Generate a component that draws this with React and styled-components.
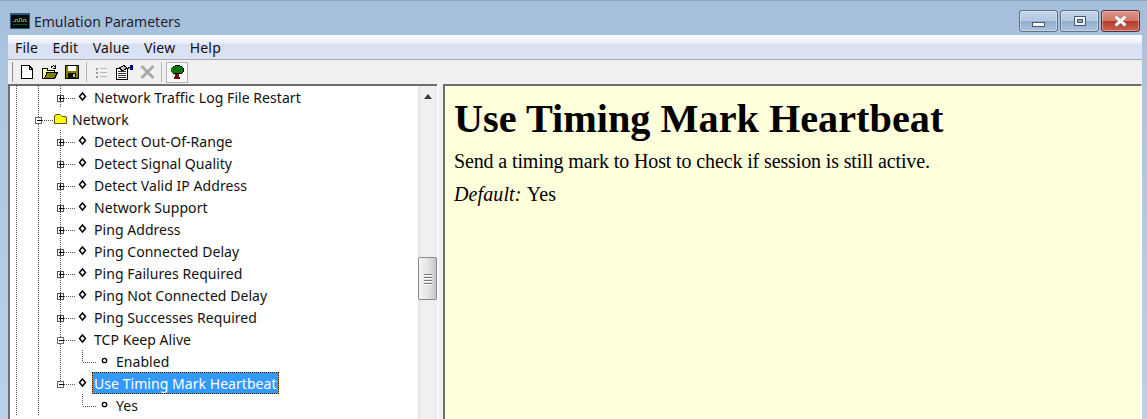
import React from 'react';
import styled, { createGlobalStyle } from 'styled-components';

const GlobalStyle = createGlobalStyle`
  html, body {
    margin: 0;
    height: 100%;
    overflow: hidden;
  }
`;

const Window = styled.div`
  box-sizing: border-box;
  height: 100vh;
  padding: 0 5px 0 8px;
  display: flex;
  flex-direction: column;
  background: linear-gradient(180deg, #a4bdd9 0%, #aac4e0 12%, #b9d1ec 100%);
  box-shadow: inset 0 1px 0 #8fa6bf;
  font-family: 'Noto Sans', sans-serif;
  color: #111;
`;

const TitleBar = styled.div`
  box-sizing: border-box;
  height: 35px;
  flex: none;
  display: flex;
  align-items: center;
  padding: 7px 2px 0 2px;
`;

const Title = styled.div`
  margin-left: 4px;
  font-size: 14px;
  color: #1c2430;
`;

const WinButtons = styled.div`
  margin-left: auto;
  display: flex;
  gap: 2px;
`;

const WinButton = styled.div`
  box-sizing: border-box;
  width: 39px;
  height: 22px;
  border: 1px solid ${p => (p.$close ? '#5d2a35' : '#5f7088')};
  border-radius: 3px;
  display: flex;
  align-items: center;
  justify-content: center;
  background: ${p =>
    p.$close
      ? 'linear-gradient(180deg, #df9488 0%, #d3786a 48%, #b8392a 52%, #c5675a 100%)'
      : 'linear-gradient(180deg, #c3d5e9 0%, #b4c9e1 48%, #94afcb 52%, #a8c2dc 100%)'};
  box-shadow: inset 0 0 0 1px rgba(255, 255, 255, 0.35);
`;

const Client = styled.div`
  flex: 1;
  min-height: 0;
  display: flex;
  flex-direction: column;
  background: #f0f0f0;
`;

const MenuBar = styled.div`
  box-sizing: border-box;
  height: 25px;
  flex: none;
  display: flex;
  align-items: center;
  padding-left: 7px;
  gap: 14.5px;
  font-size: 14px;
  letter-spacing: 0.15px;
  background: linear-gradient(180deg, #fbfcfe 0%, #e9eef9 34%, #d9e0f2 38%, #dbe2f3 100%);
  border-bottom: 1px solid #a9abb0;
`;

const ToolBar = styled.div`
  height: 24px;
  flex: none;
  display: flex;
  align-items: center;
  padding-left: 4px;
  background: #f0f0f0;
`;

const Gripper = styled.div`
  width: 1px;
  height: 20px;
  background: #8b8b8b;
  margin-right: 3px;
`;

const ToolIcon = styled.div`
  width: ${p => p.$w || 22}px;
  height: 22px;
  display: flex;
  align-items: center;
  justify-content: center;
`;

const ToolSep = styled.div`
  width: 1px;
  height: 20px;
  margin: 0 3px;
  background: #b5b5b5;
`;

const ToolPressed = styled.div`
  box-sizing: border-box;
  width: 22px;
  height: 21px;
  margin-left: 1px;
  border: 1px solid #b2b2b2;
  background: #fafafa;
  display: flex;
  align-items: center;
  justify-content: center;
`;

const Panes = styled.div`
  flex: 1;
  min-height: 0;
  display: flex;
`;

const TreePane = styled.div`
  box-sizing: border-box;
  width: 429px;
  flex: none;
  display: flex;
  border-top: 2px solid #6e6e6e;
  border-left: 2px solid #6e6e6e;
  background: #fff;
`;

const TreeList = styled.div`
  flex: 1;
  min-width: 0;
  overflow: hidden;
`;

const RowWrap = styled.div`
  height: 22px;
  display: flex;
  align-items: flex-start;
  font-size: 14px;
  letter-spacing: 0.05px;
  white-space: nowrap;
`;

const RowLabel = styled.span`
  padding: 0 1px;
  height: 22px;
  line-height: 21px;
  box-sizing: border-box;
  border: 1px dotted transparent;
  ${p =>
    p.$selected &&
    `
    background: linear-gradient(#3399ff, #3399ff) padding-box, #d9861e;
    color: #fff;
    border-color: #222;
  `}
`;

const ScrollBar = styled.div`
  width: 19px;
  flex: none;
  display: flex;
  flex-direction: column;
  align-items: center;
  background: linear-gradient(90deg, #e4e4e4 0%, #f0f0f0 20%, #f0f0f0 85%, #e8e8e8 100%);
`;

const ScrollArrow = styled.div`
  margin-top: 8px;
  width: 0;
  height: 0;
  border-left: 4px solid transparent;
  border-right: 4px solid transparent;
  border-bottom: 5px solid #3c3c3c;
`;

const ScrollThumb = styled.div`
  box-sizing: border-box;
  margin-top: 158px;
  width: 19px;
  height: 43px;
  border: 1px solid #8a8a8a;
  border-radius: 2px;
  background: linear-gradient(90deg, #f5f5f5 0%, #e6e6e6 50%, #c8c8c8 100%);
  display: flex;
  flex-direction: column;
  align-items: center;
  justify-content: center;
  gap: 2px;
`;

const ThumbLine = styled.div`
  width: 8px;
  height: 1px;
  background: #777;
  box-shadow: 0 1px 0 #fff;
`;

const Splitter = styled.div`
  box-sizing: border-box;
  width: 6px;
  flex: none;
  background: #f0f0f0;
  border-left: 2px solid #fafafa;
`;

const ContentPane = styled.div`
  flex: 1;
  min-width: 0;
  box-sizing: border-box;
  padding: 0 9px;
  border-top: 2px solid #6e6e6e;
  border-left: 2px solid #6e6e6e;
  border-right: 1px solid #fff;
  background: #ffffdc;
  font-family: 'Liberation Serif', serif;
  color: #000;
  font-size: 20px;
`;

const Heading = styled.h1`
  margin: 10px 0 8px;
  font-size: 40.25px;
  line-height: 46px;
  font-weight: bold;
`;

const Para = styled.p`
  margin: 0;
  line-height: 23px;
  padding-bottom: 10px;
  letter-spacing: ${p => p.$spacing || 0}px;
  word-spacing: ${p => p.$words || 0}px;
`;

const rows = [
  { label: 'Network Traffic Log File Restart', kind: 'plus' },
  { label: 'Network', kind: 'folder' },
  { label: 'Detect Out-Of-Range', kind: 'plus' },
  { label: 'Detect Signal Quality', kind: 'plus' },
  { label: 'Detect Valid IP Address', kind: 'plus' },
  { label: 'Network Support', kind: 'plus' },
  { label: 'Ping Address', kind: 'plus' },
  { label: 'Ping Connected Delay', kind: 'plus' },
  { label: 'Ping Failures Required', kind: 'plus' },
  { label: 'Ping Not Connected Delay', kind: 'plus' },
  { label: 'Ping Successes Required', kind: 'plus' },
  { label: 'TCP Keep Alive', kind: 'minus' },
  { label: 'Enabled', kind: 'leaf' },
  { label: 'Use Timing Mark Heartbeat', kind: 'minus', selected: true, last: true },
  { label: 'Yes', kind: 'leaf', afterLast: true },
];

const Dots = ({ x1, y1, x2, y2 }) => (
  <line x1={x1} y1={y1} x2={x2} y2={y2} stroke="#555" strokeWidth="1" strokeDasharray="1 1" shapeRendering="crispEdges" />
);

const Expander = ({ x, open }) => (
  <g shapeRendering="crispEdges">
    <rect x={x - 3} y="9.5" width="6" height="6" fill="#fff" stroke={open ? '#666' : '#555'} />
    <line x1={x - 2} y1="12.5" x2={x + 3} y2="12.5" stroke="#000" />
    {!open && <line x1={x} y1="10" x2={x} y2="15" stroke="#000" />}
  </g>
);

const Diamond = ({ x }) => (
  <path d={`M${x} 7 L${x + 3} 10.5 L${x} 14 L${x - 3} 10.5 Z`} fill="#fff" stroke="#000" strokeWidth="1.5" />
);

// the svg starts at the pane's inner edge, x = 10 on the page
const RowGlyphs = ({ kind, last, afterLast }) => {
  const w = kind === 'folder' ? 60 : kind === 'leaf' ? 104 : 82;
  const offs = 10;
  return (
    <svg width={w} height="22" viewBox={`${offs} 0 ${w} 22`} style={{ flex: 'none' }}>
      <Dots x1={16.5} y1={0} x2={16.5} y2={22} />
      <Dots x1={38.5} y1={0} x2={38.5} y2={22} />
      {kind === 'folder' && (
        <>
          <Dots x1={42} y1={12.5} x2={54} y2={12.5} />
          <Expander x={38.5} open />
          <path d="M54.5 9 Q54.5 6.5 57 6.5 L60 6.5 L62 8.5 L65 8.5 Q66.5 8.5 66.5 10 L66.5 15.5 L54.5 15.5 Z" fill="#ffff00" stroke="#555510" />
        </>
      )}
      {(kind === 'plus' || kind === 'minus') && (
        <>
          <Dots x1={60.5} y1={0} x2={60.5} y2={last ? 10 : 22} />
          <Dots x1={64} y1={12.5} x2={76} y2={12.5} />
          <Expander x={60.5} open={kind === 'minus'} />
          <Diamond x={82.5} />
        </>
      )}
      {kind === 'leaf' && (
        <>
          {!afterLast && <Dots x1={60.5} y1={0} x2={60.5} y2={22} />}
          <Dots x1={82.5} y1={0} x2={82.5} y2={12} />
          <Dots x1={82.5} y1={12.5} x2={97} y2={12.5} />
          <circle cx="104.5" cy="10.5" r="2.2" fill="#fff" stroke="#000" strokeWidth="1.3" />
        </>
      )}
    </svg>
  );
};

const AppIcon = () => (
  <svg width="20" height="16" viewBox="0 0 20 16" shapeRendering="crispEdges">
    <rect width="20" height="16" fill="#2c5a7c" />
    <rect x="1" y="2" width="18" height="13" fill="#050a08" />
    <path d="M3 8h2v-2h2v2h2v-3h2v3h2v-2h2v2h2" fill="none" stroke="#3ba33b" strokeWidth="1" />
    <path d="M3 11h14" stroke="#155015" />
  </svg>
);

const NewIcon = () => (
  <svg width="12" height="14" viewBox="0 0 12 14" shapeRendering="crispEdges">
    <path d="M0.5 0.5 H8 L11.5 4 V13.5 H0.5 Z" fill="#fff" stroke="#000" />
    <path d="M8 0.5 V4 H11.5" fill="none" stroke="#000" />
  </svg>
);

const OpenIcon = () => (
  <svg width="16" height="14" viewBox="0 0 16 14" shapeRendering="crispEdges">
    <path d="M0.5 3.5 H5.5 V5.5 H12.5 V13.5 H0.5 Z" fill="#ffff99" stroke="#000" />
    <path d="M2.5 13.5 L5 7.5 H15.5 L12.5 13.5 Z" fill="#808000" stroke="#000" />
    <path d="M9 2.5 C10 0.5 12 0.5 13.5 2 M13.5 0 V3 H11" fill="none" stroke="#000" />
  </svg>
);

const SaveIcon = () => (
  <svg width="14" height="14" viewBox="0 0 14 14" shapeRendering="crispEdges">
    <rect x="0.5" y="0.5" width="13" height="13" fill="#808000" stroke="#000" />
    <rect x="3" y="1" width="8" height="5" fill="#fff" />
    <rect x="3" y="8" width="8" height="5" fill="#111" />
    <rect x="8" y="9" width="2" height="3" fill="#c0c0c0" />
  </svg>
);

const ListIcon = () => (
  <svg width="11" height="11" viewBox="0 0 11 11" shapeRendering="crispEdges">
    <path d="M0 1h2v2h-2z M0 5h2v2h-2z M0 9h2v2h-2z" fill="#9a9a9a" />
    <path d="M4 1.5h7 M4 5.5h7 M4 9.5h7" stroke="#b8b8b8" />
  </svg>
);

const PropsIcon = () => (
  <svg width="17" height="15" viewBox="0 0 17 15" shapeRendering="crispEdges">
    <path d="M0.5 3.5 H11.5 V14.5 H0.5 Z" fill="#fff" stroke="#000" />
    <path d="M2 6.5h8 M2 8.5h8 M2 10.5h8 M2 12.5h8" stroke="#333" />
    <path d="M3 3 L8 0.5 L11 3 L7 6 Z" fill="#c8c8c8" stroke="#000" />
    <rect x="14" y="0" width="3" height="5" fill="#000080" />
    <path d="M11 4 L14 2" stroke="#000" />
  </svg>
);

const CrossIcon = () => (
  <svg width="15" height="14" viewBox="0 0 15 14">
    <path d="M1.5 1 L13.5 13 M13.5 1 L1.5 13" stroke="#a8a8a8" strokeWidth="2.6" />
  </svg>
);

const TreeIcon = () => (
  <svg width="14" height="14" viewBox="0 0 14 14" shapeRendering="crispEdges">
    <path d="M4 0h6v1h2v1h1v1h1v4h-1v1h-1v1h-9v-1h-1v-1h-1v-4h1v-1h1v-1h2z" fill="#000" />
    <path d="M4 1h6v1h2v1h1v4h-1v1h-10v-1h-1v-4h1v-1h2z" fill="#007a00" />
    <path d="M5 9h4v3h1v2h-6v-2h1z" fill="#7a0000" />
    <path d="M4 3h2v1h-2z M8 5h2v1h-2z" fill="#003c00" />
  </svg>
);

export default function App() {
  return (
    <Window>
      <GlobalStyle />
      <TitleBar>
        <AppIcon />
        <Title>Emulation Parameters</Title>
        <WinButtons>
          <WinButton>
            <svg width="13" height="6" viewBox="0 0 13 6" shapeRendering="crispEdges" style={{ marginTop: 8 }}>
              <rect x="0.5" y="0.5" width="12" height="4" fill="#fff" stroke="#46586e" />
            </svg>
          </WinButton>
          <WinButton>
            <svg width="12" height="10" viewBox="0 0 12 10" shapeRendering="crispEdges">
              <rect x="0.5" y="0.5" width="11" height="9" fill="#eef2f7" stroke="#46586e" />
              <rect x="3.5" y="3.5" width="5" height="3" fill="#8ea6bf" stroke="#46586e" />
            </svg>
          </WinButton>
          <WinButton $close>
            <svg width="15" height="12" viewBox="0 0 15 12">
              <path d="M2.5 1.5 L12.5 10.5 M12.5 1.5 L2.5 10.5" stroke="#3c1a1a" strokeWidth="4.2" opacity="0.45" />
              <path d="M2.5 1.5 L12.5 10.5 M12.5 1.5 L2.5 10.5" stroke="#f5f5f5" strokeWidth="3.2" />
            </svg>
          </WinButton>
        </WinButtons>
      </TitleBar>
      <Client>
        <MenuBar>
          <span>File</span>
          <span>Edit</span>
          <span>Value</span>
          <span>View</span>
          <span>Help</span>
        </MenuBar>
        <ToolBar>
          <Gripper />
          <ToolIcon><NewIcon /></ToolIcon>
          <ToolIcon $w={23}><OpenIcon /></ToolIcon>
          <ToolIcon><SaveIcon /></ToolIcon>
          <ToolSep />
          <ToolIcon><ListIcon /></ToolIcon>
          <ToolIcon $w={24}><PropsIcon /></ToolIcon>
          <ToolIcon><CrossIcon /></ToolIcon>
          <ToolSep />
          <ToolPressed><TreeIcon /></ToolPressed>
        </ToolBar>
        <Panes>
          <TreePane>
            <TreeList>
              {rows.map(r => (
                <RowWrap key={r.label}>
                  <RowGlyphs kind={r.kind} last={r.last} afterLast={r.afterLast} />
                  <RowLabel $selected={r.selected}>{r.label}</RowLabel>
                </RowWrap>
              ))}
            </TreeList>
            <ScrollBar>
              <ScrollArrow />
              <ScrollThumb>
                <ThumbLine />
                <ThumbLine />
                <ThumbLine />
                <ThumbLine />
              </ScrollThumb>
            </ScrollBar>
          </TreePane>
          <Splitter />
          <ContentPane>
            <Heading>Use Timing Mark Heartbeat</Heading>
            <Para $spacing={-0.127}>Send a timing mark to Host to check if session is still active.</Para>
            <Para $spacing={0.1} $words={1}><em>Default:</em> Yes</Para>
          </ContentPane>
        </Panes>
      </Client>
    </Window>
  );
}
